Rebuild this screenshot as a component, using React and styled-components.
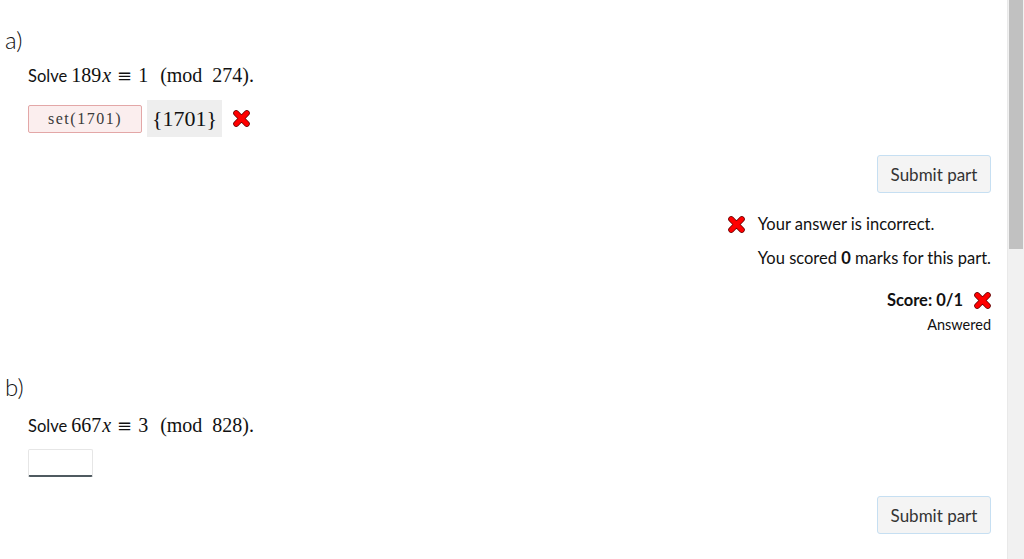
import React from "react";
import styled, { createGlobalStyle } from "styled-components";

const Global = createGlobalStyle`
  html, body { height: 100%; }
  body {
    margin: 0;
    overflow: hidden;
    background: #fff;
    color: #111;
    font-family: Lato, "Open Sans", sans-serif;
    font-size: 16.5px;
  }
`;

const Shell = styled.div`
  display: flex;
  height: 100vh;
  overflow: hidden;
`;

const Page = styled.main`
  flex: 1;
  min-width: 0;
  padding: 0 16px 0 5px;
`;

const ScrollTrack = styled.div`
  flex: 0 0 17px;
  box-sizing: border-box;
  background: #f1f1f1;
  border-left: 1px solid #e9e9e9;
  padding: 0 1px 0 1px;
`;

const ScrollThumb = styled.div`
  height: 249px;
  background: #c1c1c1;
`;

const Part = styled.section`
  display: flex;
  flex-direction: column;
`;

const PartLabel = styled.h2`
  margin: ${(p) => p.$top}px 0 0;
  font-size: 24px;
  font-weight: 300;
  line-height: 30px;
  color: #111;
`;

const PartBody = styled.div`
  display: flex;
  flex-direction: column;
  padding-left: 23px;
`;

const Prompt = styled.p`
  margin: ${(p) => p.$top}px 0 0;
  display: flex;
  align-items: baseline;
  gap: 4px;
  height: 30px;
  line-height: 30px;
`;

const Math = styled.span`
  display: inline-flex;
  align-items: baseline;
  font-family: "Liberation Serif", "DejaVu Serif", serif;
  font-size: 20px;
  white-space: nowrap;
`;

const MathVar = styled.i`
  font-style: italic;
  margin-left: 1px;
`;

const Rel = styled.span`
  margin: 0 ${(p) => p.$space}px;
  font-family: "DejaVu Serif", serif;
  font-size: 18px;
`;

const Gap = styled.span`
  display: inline-block;
  width: ${(p) => p.$w}px;
`;

const AnswerRow = styled.div`
  display: flex;
  align-items: center;
  gap: 5px;
  margin-top: ${(p) => p.$top}px;
`;

const AnswerInput = styled.input`
  box-sizing: border-box;
  width: ${(p) => p.$w}px;
  height: 28px;
  padding: 0 4px;
  font-family: "Liberation Serif", serif;
  font-size: 16px;
  letter-spacing: 1.5px;
  text-align: center;
  color: #3a3a3a;
  background: ${(p) => (p.$wrong ? "#fbeeee" : "#fff")};
  border: 1px solid ${(p) => (p.$wrong ? "#e3a7a7" : "#e6e6e6")};
  border-bottom: ${(p) => (p.$wrong ? "1px solid #e3a7a7" : "2px solid #4f5a60")};
  border-radius: 2px;
  outline: none;
`;

const Preview = styled.span`
  display: inline-flex;
  align-items: center;
  height: 37px;
  padding: 0 5px;
  background: #eee;
  font-family: "Liberation Serif", "DejaVu Serif", serif;
  font-size: 22px;
`;

const Cross = ({ size = 17 }) => (
  <svg width={size} height={size} viewBox="0 0 16 16" aria-hidden="true">
    <g strokeLinecap="round">
      <path d="M3 3 L13 13 M13 3 L3 13" stroke="#6a0000" strokeWidth="5.6" />
      <path d="M3 3 L13 13 M13 3 L3 13" stroke="#f00" strokeWidth="4.2" />
    </g>
  </svg>
);

const MarkSlot = styled.span`
  display: inline-flex;
  margin-left: 6px;
`;

const SubmitRow = styled.div`
  display: flex;
  justify-content: flex-end;
  margin-top: ${(p) => p.$top}px;
`;

const SubmitButton = styled.button`
  box-sizing: border-box;
  width: 114px;
  height: 38px;
  background: #f4f4f4;
  border: 1px solid #c6dff2;
  border-radius: 3px;
  font-family: inherit;
  font-size: 17px;
  color: #333;
  cursor: pointer;
`;

const Feedback = styled.div`
  align-self: flex-end;
  display: grid;
  grid-template-columns: 16px auto;
  grid-auto-rows: 34px;
  column-gap: 14px;
  align-items: center;
  margin-top: 14px;
`;

const FeedbackText = styled.span`
  grid-column: 2;
  white-space: nowrap;
`;

const ScoreBox = styled.div`
  display: flex;
  flex-direction: column;
  align-items: flex-end;
  margin-top: 13px;
`;

const ScoreLine = styled.div`
  display: flex;
  align-items: center;
  gap: 11px;
  font-weight: 700;
  height: 24px;
`;

const Status = styled.div`
  font-size: 14.5px;
  height: 26px;
  line-height: 26px;
`;

export default function App() {
  return (
    <>
      <Global />
      <Shell>
        <Page>
          <Part>
            <PartLabel $top={25}>a)</PartLabel>
            <PartBody>
              <Prompt $top={5}>
                Solve
                <Math>
                  189<MathVar>x</MathVar>
                  <Rel $space={6}>≡</Rel>1<Gap $w={12} />
                  (mod<Gap $w={10} />
                  274).
                </Math>
              </Prompt>
              <AnswerRow $top={10}>
                <AnswerInput $w={114} $wrong readOnly value="set(1701)" />
                <Preview>{"{1701}"}</Preview>
                <MarkSlot>
                  <Cross />
                </MarkSlot>
              </AnswerRow>
              <SubmitRow $top={18}>
                <SubmitButton>Submit part</SubmitButton>
              </SubmitRow>
              <Feedback>
                <Cross />
                <FeedbackText>Your answer is incorrect.</FeedbackText>
                <FeedbackText>
                  You scored <b>0</b> marks for this part.
                </FeedbackText>
              </Feedback>
              <ScoreBox>
                <ScoreLine>
                  Score: 0/1 <Cross />
                </ScoreLine>
                <Status>Answered</Status>
              </ScoreBox>
            </PartBody>
          </Part>
          <Part>
            <PartLabel $top={34}>b)</PartLabel>
            <PartBody>
              <Prompt $top={8}>
                Solve
                <Math>
                  667<MathVar>x</MathVar>
                  <Rel $space={6}>≡</Rel>3<Gap $w={12} />
                  (mod<Gap $w={10} />
                  828).
                </Math>
              </Prompt>
              <AnswerRow $top={9}>
                <AnswerInput $w={65} />
              </AnswerRow>
              <SubmitRow $top={19}>
                <SubmitButton>Submit part</SubmitButton>
              </SubmitRow>
            </PartBody>
          </Part>
        </Page>
        <ScrollTrack>
          <ScrollThumb />
        </ScrollTrack>
      </Shell>
    </>
  );
}
